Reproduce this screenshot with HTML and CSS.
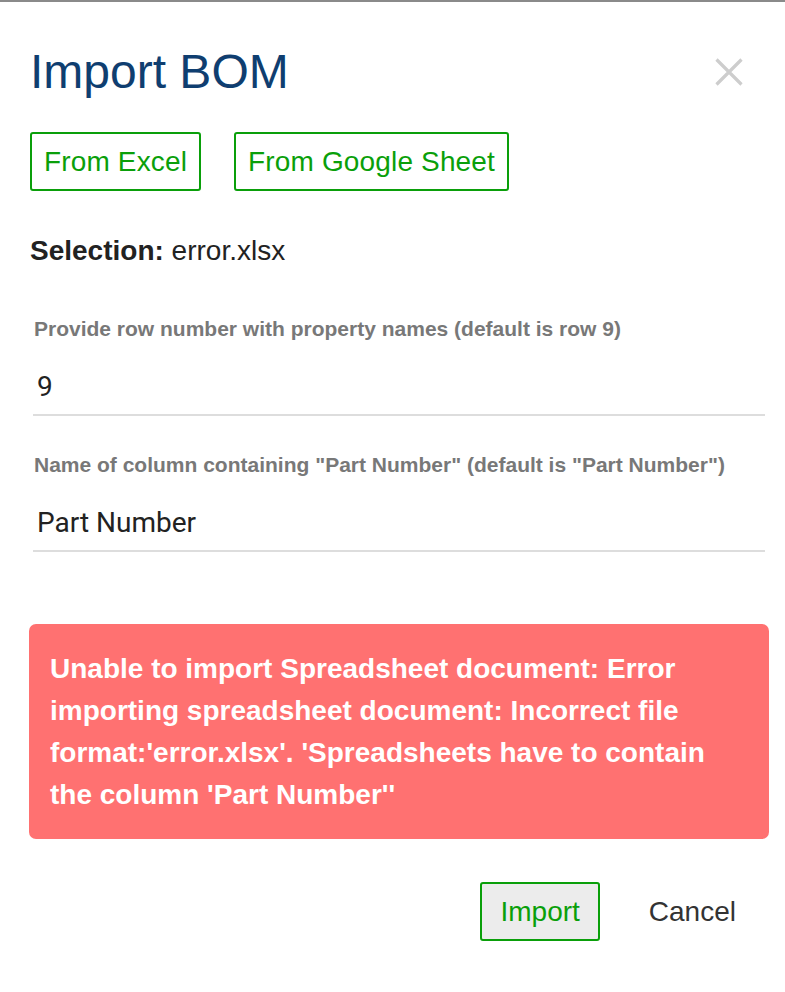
FILE: index.html
```html
<!DOCTYPE html>
<html lang="en">
<head>
<meta charset="utf-8">
<title>Import BOM</title>
<link rel="stylesheet" href="styles.css">
</head>
<body>
<div class="backdrop-strip"></div>
<div class="dialog">
  <div class="header">
    <h1 class="title">Import BOM</h1>
    <button class="close" aria-label="Close">
      <svg width="28" height="28" viewBox="0 0 28 28"><path d="M1.5 1.5 L26.5 26.5 M26.5 1.5 L1.5 26.5" stroke="#cdcdcd" stroke-width="3.2" fill="none"/></svg>
    </button>
  </div>
  <div class="sources">
    <button class="btn btn-outline">From Excel</button>
    <button class="btn btn-outline">From Google Sheet</button>
  </div>
  <p class="selection"><strong>Selection:</strong> error.xlsx</p>
  <div class="field field-first">
    <label class="field-label" for="row">Provide row number with property names (default is row 9)</label>
    <input class="field-input" id="row" type="text" value="9">
  </div>
  <div class="field">
    <label class="field-label" for="col">Name of column containing "Part Number" (default is "Part Number")</label>
    <input class="field-input" id="col" type="text" value="Part Number">
  </div>
  <div class="error">Unable to import Spreadsheet document: Error importing spreadsheet document: Incorrect file format:'error.xlsx'. 'Spreadsheets have to contain the column 'Part Number''</div>
  <div class="actions">
    <button class="btn btn-primary">Import</button>
    <button class="btn btn-link">Cancel</button>
  </div>
</div>
</body>
</html>
```
FILE: styles.css
```css
html, body {
  margin: 0;
  padding: 0;
  background: #ffffff;
}

body {
  font-family: "Liberation Sans", Arial, sans-serif;
  color: #222222;
}

.backdrop-strip {
  height: 2px;
  background: #8a8a8a;
}

.dialog {
  padding: 42px 16px 0 30px;
}

.header {
  display: flex;
  justify-content: space-between;
  align-items: flex-start;
}

.title {
  margin: 0;
  font-size: 48px;
  line-height: 56px;
  font-weight: normal;
  color: #0f3e70;
}

.close {
  margin: 14px 26px 0 0;
  padding: 0;
  border: none;
  background: none;
  width: 28px;
  height: 28px;
  display: flex;
}

.sources {
  display: flex;
  gap: 33px;
  margin-top: 32px;
}

.btn {
  font-family: "Liberation Sans", Arial, sans-serif;
  font-size: 28px;
  line-height: 32px;
  padding: 11.5px 12px;
  border: 2px solid transparent;
  border-radius: 3px;
  background: none;
  cursor: pointer;
  margin: 0;
}

.btn-outline {
  border-color: #0a9f0a;
  color: #0a9f0a;
  background: #ffffff;
  letter-spacing: 0.15px;
}

.selection {
  margin: 39.3px 0 0 0;
  font-size: 28px;
  line-height: 42px;
  color: #222222;
}

.selection strong {
  font-weight: bold;
}

.field {
  margin: 37.4px 4px 0 3px;
  display: flex;
  flex-direction: column;
}

.field-first {
  margin-top: 44.4px;
}

.field-label {
  font-size: 21px;
  line-height: 24px;
  font-weight: bold;
  color: #787878;
  padding-left: 1px;
}

.field-input {
  margin-top: 28.5px;
  font-family: Roboto, "Liberation Sans", sans-serif;
  font-size: 28px;
  line-height: 34px;
  height: 46.5px;
  box-sizing: border-box;
  padding: 0 4px 10.5px 4px;
  border: none;
  border-bottom: 2px solid #dddddd;
  color: #222222;
  background: transparent;
  outline: none;
  width: 100%;
}

.error {
  margin: 72px 0 0 -1px;
  padding: 23.5px 21px;
  background: #ff7171;
  border-radius: 7px;
  color: #ffffff;
  font-weight: bold;
  font-size: 28px;
  line-height: 42px;
}

.actions {
  display: flex;
  justify-content: flex-end;
  gap: 29px;
  margin-top: 43px;
  padding-right: 13px;
}

.btn-primary {
  padding: 11.5px 18px;
  border-color: #0a9f0a;
  color: #0a9f0a;
  background: #ececec;
}

.btn-link {
  padding: 11.5px 18px;
  color: #333333;
}
```
